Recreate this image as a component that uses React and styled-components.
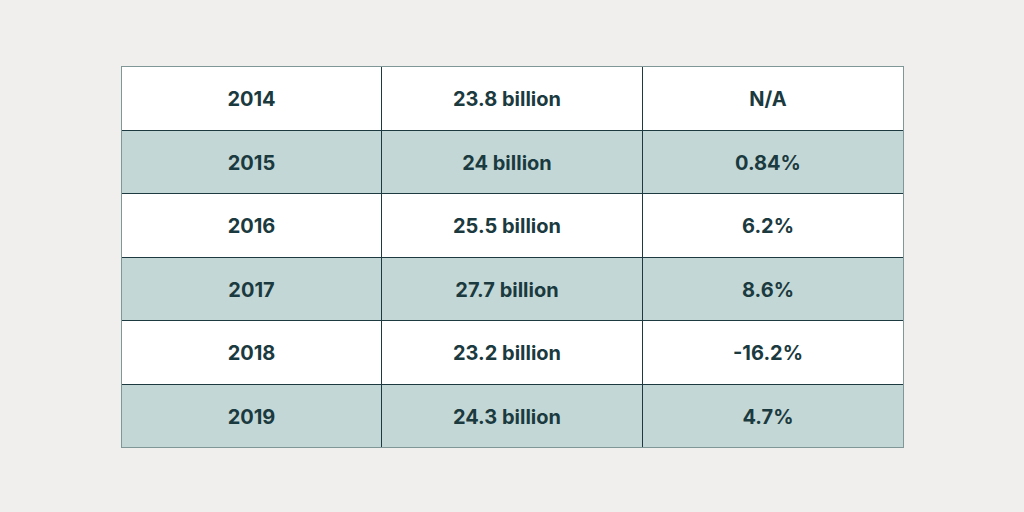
import React from "react";
import styled, { createGlobalStyle } from "styled-components";

const rows = [
  ["2014", "23.8 billion", "N/A"],
  ["2015", "24 billion", "0.84%"],
  ["2016", "25.5 billion", "6.2%"],
  ["2017", "27.7 billion", "8.6%"],
  ["2018", "23.2 billion", "-16.2%"],
  ["2019", "24.3 billion", "4.7%"],
];

function App() {
  return (
    <>
      <GlobalStyle />
      <Page>
        <Table>
          {rows.map((row, i) =>
            row.map((value, j) => (
              <Cell key={i + "-" + j} $shaded={i % 2 === 1} $first={j === 0}>
                {value}
              </Cell>
            ))
          )}
        </Table>
      </Page>
    </>
  );
}

const GlobalStyle = createGlobalStyle`
  html, body {
    margin: 0;
    background: #f0efed;
  }
`;

const Page = styled.div`
  width: 1024px;
  height: 512px;
  box-sizing: border-box;
  padding-top: 66px;
  display: flex;
  justify-content: center;
  align-items: flex-start;
  font-family: Inter, "Open Sans", sans-serif;
`;

const Table = styled.div`
  width: 783px;
  height: 382px;
  box-sizing: border-box;
  border: 1px solid #7f9797;
  background: #1d3a40;
  display: grid;
  grid-template-columns: 259px 260px 260px;
  grid-template-rows: repeat(6, 1fr);
  gap: 1px;
  margin-left: 1px;
`;

const Cell = styled.div`
  display: flex;
  align-items: center;
  justify-content: center;
  padding-top: 2px;
  padding-right: ${(p) => (p.$first ? "0" : "10px")};
  background: ${(p) => (p.$shaded ? "#c3d8d6" : "#ffffff")};
  color: #1b3a40;
  font-size: 20px;
  font-weight: 700;
`;

export default App;
